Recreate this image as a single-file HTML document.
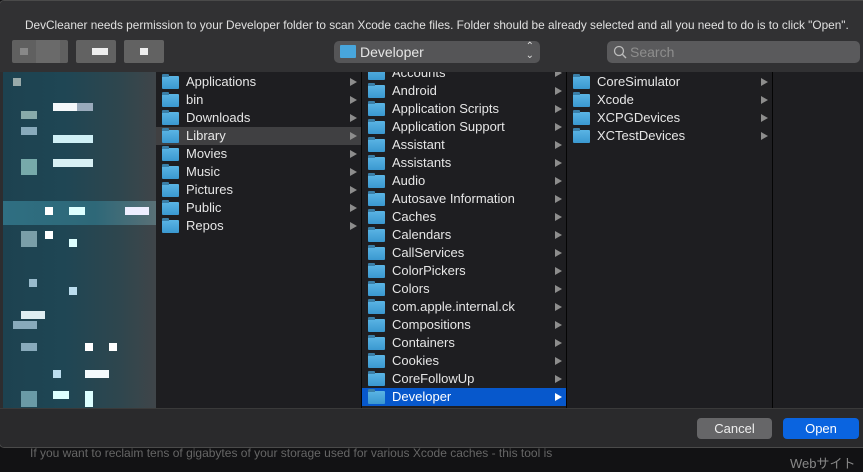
<!DOCTYPE html>
<html><head><meta charset="utf-8"><style>
*{margin:0;padding:0;box-sizing:border-box}
body{width:863px;height:467px;background:#121214;position:relative;overflow:hidden;font-family:"Liberation Sans",sans-serif;color:#e6e6e6}
.dlg{position:absolute;left:-1px;top:0;width:872px;height:448px;background:#2d2d2f;border:1px solid #4a4a4a;border-radius:5px;overflow:hidden}
.hdr{position:absolute;left:0;top:0;width:100%;height:71px;background:#313133}
.msg{position:absolute;left:25px;top:17px;font-size:12px;color:#e0e0e0;white-space:nowrap;transform:scaleX(0.985);transform-origin:left}
.btn{position:absolute;top:39px;height:23px;background:#626262;border-radius:2px}
.pop{position:absolute;left:334px;top:40px;width:206px;height:22px;background:#555557;border-radius:5px;font-size:14px}
.srch{position:absolute;left:607px;top:40px;width:253px;height:22px;background:#5a5a5c;border-radius:5px;font-size:14px;color:#8e8e8e}
.side{position:absolute;left:3px;top:71px;width:154px;height:336px;background:linear-gradient(90deg,#1d4250 0%,#1f4654 40%,#2e464e 75%,#404549 100%)}
.px{position:absolute}
.col{position:absolute;top:71px;height:336px;background:#1e1e21;border-right:1px solid #050505;overflow:hidden}
.row{position:absolute;left:0;right:0;height:18px;font-size:13px;line-height:18px;color:#e6e6e6;white-space:nowrap}
.row .f{position:absolute;left:6px;top:3px;width:17px;height:13px;background:linear-gradient(#5ab4e4,#3a98d0);border-radius:1px}
.row .f:before{content:"";position:absolute;left:0;top:-2px;width:7px;height:3px;background:#3a7fa8;border-radius:1px 1px 0 0}
.row .t{position:absolute;left:30px}
.row .a{position:absolute;right:4px;top:5px;width:0;height:0;border-left:7px solid #8d8d8d;border-top:4px solid transparent;border-bottom:4px solid transparent}
.sel{background:#404042}
.blue{background:#0758cc}
.blue .a{border-left-color:#fff}
.ftr{position:absolute;left:0;top:407px;width:100%;height:41px;background:#2a2a2c;border-top:1px solid #3a3a3a}
.b2{position:absolute;top:417px;height:21px;border-radius:4px;font-size:13px;text-align:center;line-height:21px;color:#eee}
</style></head><body>
<div style="position:absolute;left:30px;top:446px;width:1000px;font-size:12px;color:#666;white-space:nowrap">If you want to reclaim tens of gigabytes of your storage used for various Xcode caches - this tool is</div>
<div style="position:absolute;left:790px;top:453px;font-size:13px;color:#888;font-family:'Liberation Sans','Noto Sans CJK JP',sans-serif">Webサイト</div>
<div class="dlg">
<div class="hdr">
<div class="msg">DevCleaner needs permission to your Developer folder to scan Xcode cache files. Folder should be already selected and all you need to do is to click "Open".</div>
<div class="btn" style="left:12px;width:56px;background:#606060"><div class="px" style="left:8px;top:8px;width:8px;height:7px;background:#888"></div><div class="px" style="left:24px;top:0;width:24px;height:23px;background:#6a6a6a"></div></div>
<div class="btn" style="left:76px;width:40px"><div class="px" style="left:16px;top:8px;width:16px;height:7px;background:#eee"></div></div>
<div class="btn" style="left:124px;width:40px"><div class="px" style="left:16px;top:8px;width:8px;height:7px;background:#eee"></div></div>
<div class="pop"><div class="px" style="left:6px;top:4px;width:16px;height:13px;background:#48a6dc;border-radius:1px"></div><span style="position:absolute;left:26px;top:3px">Developer</span><span style="position:absolute;right:6px;top:1px;font-size:10px;line-height:9px;color:#ddd">⌃<br>⌄</span></div>
<div class="srch"><svg style="position:absolute;left:6px;top:4px" width="14" height="14" viewBox="0 0 14 14"><circle cx="6" cy="6" r="4.5" fill="none" stroke="#bbb" stroke-width="1.3"/><line x1="9.3" y1="9.3" x2="13" y2="13" stroke="#bbb" stroke-width="1.4"/></svg><span style="position:absolute;left:23px;top:3px">Search</span></div>
</div>
<div class="side">
<div class="px" style="left:10px;top:6px;width:8px;height:8px;background:#9aa"></div>
<div class="px" style="left:50px;top:31px;width:24px;height:8px;background:#f4f8fa"></div>
<div class="px" style="left:74px;top:31px;width:16px;height:8px;background:#9ab"></div>
<div class="px" style="left:18px;top:39px;width:16px;height:8px;background:#8aa"></div>
<div class="px" style="left:50px;top:63px;width:40px;height:8px;background:#cfeff5"></div>
<div class="px" style="left:18px;top:55px;width:16px;height:8px;background:#8ab"></div>
<div class="px" style="left:18px;top:87px;width:16px;height:16px;background:#7aa"></div>
<div class="px" style="left:50px;top:87px;width:40px;height:8px;background:#d8f0f4"></div>
<div class="px" style="left:0;top:129px;width:154px;height:24px;background:linear-gradient(90deg,#2f6f82,#2e6878 60%,#5a7076)"></div>
<div class="px" style="left:42px;top:135px;width:8px;height:8px;background:#fff"></div>
<div class="px" style="left:66px;top:135px;width:16px;height:8px;background:#dff"></div>
<div class="px" style="left:122px;top:135px;width:24px;height:8px;background:#eef"></div>
<div class="px" style="left:18px;top:159px;width:16px;height:16px;background:#7a9ea8"></div>
<div class="px" style="left:42px;top:159px;width:8px;height:8px;background:#fff"></div>
<div class="px" style="left:66px;top:167px;width:8px;height:8px;background:#dff"></div>
<div class="px" style="left:26px;top:207px;width:8px;height:8px;background:#9bc"></div>
<div class="px" style="left:66px;top:215px;width:8px;height:8px;background:#bde"></div>
<div class="px" style="left:18px;top:239px;width:24px;height:8px;background:#dfeef2"></div>
<div class="px" style="left:10px;top:249px;width:24px;height:8px;background:#8ab"></div>
<div class="px" style="left:18px;top:271px;width:16px;height:8px;background:#8ab"></div>
<div class="px" style="left:82px;top:271px;width:8px;height:8px;background:#fff"></div>
<div class="px" style="left:106px;top:271px;width:8px;height:8px;background:#fff"></div>
<div class="px" style="left:50px;top:298px;width:8px;height:8px;background:#bde"></div>
<div class="px" style="left:82px;top:298px;width:24px;height:8px;background:#f4fafc"></div>
<div class="px" style="left:18px;top:319px;width:16px;height:16px;background:#6a9aa6"></div>
<div class="px" style="left:50px;top:319px;width:16px;height:8px;background:#dff"></div>
<div class="px" style="left:82px;top:319px;width:8px;height:16px;background:#dff"></div>
</div>
<div class="col" style="left:156px;width:206px">
<div class="row" style="top:1px"><i class="f"></i><span class="t">Applications</span><i class="a"></i></div>
<div class="row" style="top:19px"><i class="f"></i><span class="t">bin</span><i class="a"></i></div>
<div class="row" style="top:37px"><i class="f"></i><span class="t">Downloads</span><i class="a"></i></div>
<div class="row sel" style="top:55px"><i class="f"></i><span class="t">Library</span><i class="a"></i></div>
<div class="row" style="top:73px"><i class="f"></i><span class="t">Movies</span><i class="a"></i></div>
<div class="row" style="top:91px"><i class="f"></i><span class="t">Music</span><i class="a"></i></div>
<div class="row" style="top:109px"><i class="f"></i><span class="t">Pictures</span><i class="a"></i></div>
<div class="row" style="top:127px"><i class="f"></i><span class="t">Public</span><i class="a"></i></div>
<div class="row" style="top:145px"><i class="f"></i><span class="t">Repos</span><i class="a"></i></div>
</div>
<div class="col" style="left:362px;width:205px">
<div class="row" style="top:-8px"><i class="f"></i><span class="t">Accounts</span><i class="a"></i></div>
<div class="row" style="top:10px"><i class="f"></i><span class="t">Android</span><i class="a"></i></div>
<div class="row" style="top:28px"><i class="f"></i><span class="t">Application Scripts</span><i class="a"></i></div>
<div class="row" style="top:46px"><i class="f"></i><span class="t">Application Support</span><i class="a"></i></div>
<div class="row" style="top:64px"><i class="f"></i><span class="t">Assistant</span><i class="a"></i></div>
<div class="row" style="top:82px"><i class="f"></i><span class="t">Assistants</span><i class="a"></i></div>
<div class="row" style="top:100px"><i class="f"></i><span class="t">Audio</span><i class="a"></i></div>
<div class="row" style="top:118px"><i class="f"></i><span class="t">Autosave Information</span><i class="a"></i></div>
<div class="row" style="top:136px"><i class="f"></i><span class="t">Caches</span><i class="a"></i></div>
<div class="row" style="top:154px"><i class="f"></i><span class="t">Calendars</span><i class="a"></i></div>
<div class="row" style="top:172px"><i class="f"></i><span class="t">CallServices</span><i class="a"></i></div>
<div class="row" style="top:190px"><i class="f"></i><span class="t">ColorPickers</span><i class="a"></i></div>
<div class="row" style="top:208px"><i class="f"></i><span class="t">Colors</span><i class="a"></i></div>
<div class="row" style="top:226px"><i class="f"></i><span class="t">com.apple.internal.ck</span><i class="a"></i></div>
<div class="row" style="top:244px"><i class="f"></i><span class="t">Compositions</span><i class="a"></i></div>
<div class="row" style="top:262px"><i class="f"></i><span class="t">Containers</span><i class="a"></i></div>
<div class="row" style="top:280px"><i class="f"></i><span class="t">Cookies</span><i class="a"></i></div>
<div class="row" style="top:298px"><i class="f"></i><span class="t">CoreFollowUp</span><i class="a"></i></div>
<div class="row blue" style="top:316px;color:#fff"><i class="f"></i><span class="t">Developer</span><i class="a"></i></div>
</div>
<div class="col" style="left:567px;width:206px">
<div class="row" style="top:1px"><i class="f"></i><span class="t">CoreSimulator</span><i class="a"></i></div>
<div class="row" style="top:19px"><i class="f"></i><span class="t">Xcode</span><i class="a"></i></div>
<div class="row" style="top:37px"><i class="f"></i><span class="t">XCPGDevices</span><i class="a"></i></div>
<div class="row" style="top:55px"><i class="f"></i><span class="t">XCTestDevices</span><i class="a"></i></div>
</div>
<div class="col" style="left:773px;width:100px;border-right:none"></div>
<div class="ftr"></div>
<div class="b2" style="left:697px;width:75px;background:#666668">Cancel</div>
<div class="b2" style="left:783px;width:76px;background:#0a64e0;color:#fff">Open</div>
</div>
</body></html>
